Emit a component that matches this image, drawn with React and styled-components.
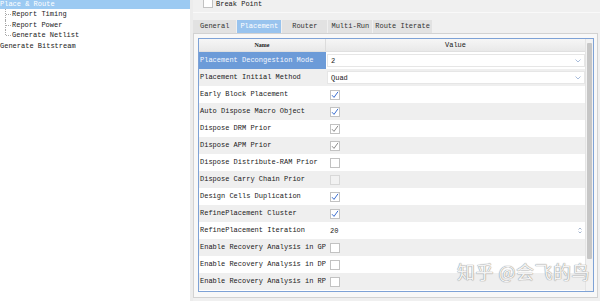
import React from 'react';
import styled, { createGlobalStyle } from 'styled-components';

const GlobalStyle = createGlobalStyle`
  html, body { margin: 0; padding: 0; }
  body { font-family: "Liberation Mono", "DejaVu Sans Mono", monospace; }
`;

const Page = styled.div`
  position: relative;
  display: flex;
  width: 600px;
  height: 301px;
  overflow: hidden;
  font-size: 7px;
  color: #1a1a1a;
`;

// 左側のツリー
const LeftPanel = styled.div`
  width: 190px;
  background: #fff;
  border-right: 3px solid #ececec;
`;

const Tree = styled.div`
  margin-top: -1.5px;
`;

const TreeRow = styled.div`
  position: relative;
  height: 10.5px;
  line-height: 10.5px;
  padding-left: ${p => (p.$child ? 12 : 0)}px;
  background: ${p => (p.$selected ? '#9ccaf2' : 'transparent')};
  color: ${p => (p.$selected ? '#fff' : '#1a1a1a')};
  white-space: nowrap;
  &::before {
    content: '';
    display: ${p => (p.$child ? 'block' : 'none')};
    position: absolute;
    left: 5px;
    top: 0;
    height: ${p => (p.$last ? '5px' : '10.5px')};
    border-left: 1px dotted #a8a8a8;
  }
  &::after {
    content: '';
    display: ${p => (p.$child ? 'block' : 'none')};
    position: absolute;
    left: 6px;
    top: 5px;
    width: 5px;
    border-top: 1px dotted #a8a8a8;
  }
`;

// 右側
const RightPanel = styled.div`
  flex: 1;
  display: flex;
  flex-direction: column;
  background: #f0f0f0;
`;

const TopBar = styled.div`
  height: 13px;
  display: flex;
  align-items: flex-start;
  gap: 3px;
  padding-left: 10px;
  border-bottom: 1px solid #f9f9f9;
  line-height: 8px;
`;

const Tabs = styled.div`
  display: flex;
  gap: 1px;
  margin-top: 7px;
  height: 13px;
`;

const Tab = styled.div`
  height: 13px;
  line-height: 13px;
  padding: 0 ${p => p.$pad}px;
  background: ${p => (p.$active ? '#98c3ee' : '#e2e2e2')};
  color: ${p => (p.$active ? '#fff' : '#333')};
  white-space: nowrap;
`;

const Pane = styled.div`
  flex: 1;
  margin: 0 2px 3px 0;
  border: 1px solid #d2d2d2;
  background: #f8f8f8;
  padding: 4px 3px 5px 4px;
  display: flex;
`;

const Table = styled.div`
  flex: 1;
  display: flex;
  border: 1px solid #7ea2d6;
  height: 252px;
  background: #fff;
`;

const Grid = styled.div`
  flex: 1;
  display: flex;
  flex-direction: column;
`;

const Header = styled.div`
  display: grid;
  grid-template-columns: 127px 1fr;
  height: 13px;
  background: linear-gradient(#f6f6f6, #e9e9e9);
  border-bottom: 1px solid #e0e0e0;
  box-sizing: border-box;
`;

const HeadCell = styled.div`
  text-align: center;
  line-height: 12px;
  font-weight: ${p => (p.$bold ? 'bold' : 'normal')};
  font-size: ${p => (p.$bold ? '6px' : '7px')};
  font-family: ${p => (p.$bold ? '"Liberation Serif", serif' : 'inherit')};
  border-right: ${p => (p.$bold ? '1px solid #dcdcdc' : 'none')};
`;

const Row = styled.div`
  display: grid;
  grid-template-columns: 127px 1fr;
  height: 17px;
  background: ${p => (p.$alt ? '#efefef' : '#fff')};
`;

const NameCell = styled.div`
  padding-left: 1px;
  line-height: 17px;
  white-space: nowrap;
  overflow: hidden;
  background: ${p => (p.$selected ? '#6c9bd8' : 'transparent')};
  color: ${p => (p.$selected ? '#f4f8ff' : '#1a1a1a')};
`;

const ValueCell = styled.div`
  display: flex;
  align-items: center;
  padding-left: 4px;
`;

const Combo = styled.div`
  flex: 1;
  height: 13px;
  margin-left: -3px;
  padding-left: 3px;
  box-sizing: border-box;
  display: flex;
  align-items: center;
  justify-content: space-between;
  background: #fff;
  border: 1px solid #e6e6e6;
  svg { margin-right: 3px; }
`;

const Spin = styled.div`
  flex: 1;
  display: flex;
  align-items: center;
  justify-content: space-between;
  padding-right: 3px;
`;

const Box = styled.span`
  display: inline-flex;
  align-items: center;
  justify-content: center;
  width: 8px;
  height: 8px;
  border: 1px solid ${p => (p.$disabled ? '#d8d8d8' : '#c2c2c2')};
  background: ${p => (p.$disabled ? '#f2f2f2' : '#fff')};
  margin-top: ${p => p.$top || 0}px;
`;

const ScrollBar = styled.div`
  width: 7px;
  background: #f2f2f2;
  border-left: 1px solid #e4e4e4;
  display: flex;
  flex-direction: column;
  align-items: center;
`;

const Thumb = styled.div`
  width: 5px;
  height: 216px;
  margin-top: 4px;
  background: #c6c6c6;
  border-radius: 1px;
`;

const Watermark = styled.div`
  position: absolute;
  right: 10px;
  bottom: 17px;
  font-family: "Noto Sans CJK SC", sans-serif;
  font-size: 18px;
  color: #f4f4f4;
  text-shadow: 0 0 1px #8a8a8a, 0 0 1px #9a9a9a;
  letter-spacing: 0.5px;
`;

function Check({ state, disabled, top }) {
  const color = disabled ? '#8c8c8c' : '#3c6fd0';
  return (
    <Box $disabled={disabled && !state} $top={top}>
      {state && (
        <svg width="8" height="8" viewBox="0 0 8 8">
          <path d="M1 4.2 L3 6.4 L7 0.8" fill="none" stroke={color} strokeWidth="1" />
        </svg>
      )}
    </Box>
  );
}

const Chevron = () => (
  <svg width="6" height="4" viewBox="0 0 6 4">
    <path d="M0.5 0.5 L3 3 L5.5 0.5" fill="none" stroke="#9fb6d8" strokeWidth="0.9" />
  </svg>
);

const Spinner = () => (
  <svg width="4" height="7" viewBox="0 0 4 7">
    <path d="M0.5 2.5 L2 1 L3.5 2.5 M0.5 4.5 L2 6 L3.5 4.5" fill="none" stroke="#8fa4c4" strokeWidth="0.8" />
  </svg>
);

const rows = [
  { name: 'Placement Decongestion Mode', combo: '2', selected: true },
  { name: 'Placement Initial Method', combo: 'Quad' },
  { name: 'Early Block Placement', check: true },
  { name: 'Auto Dispose Macro Object', check: true },
  { name: 'Dispose DRM Prior', check: true, disabled: true },
  { name: 'Dispose APM Prior', check: true, disabled: true },
  { name: 'Dispose Distribute-RAM Prior', check: false },
  { name: 'Dispose Carry Chain Prior', check: false, disabled: true },
  { name: 'Design Cells Duplication', check: true },
  { name: 'RefinePlacement Cluster', check: true },
  { name: 'RefinePlacement Iteration', spin: '20' },
  { name: 'Enable Recovery Analysis in GP', check: false },
  { name: 'Enable Recovery Analysis in DP', check: false },
  { name: 'Enable Recovery Analysis in RP', check: false },
];

const tabs = [
  { label: 'General', pad: 7 },
  { label: 'Placement', pad: 3, active: true },
  { label: 'Router', pad: 10 },
  { label: 'Multi-Run', pad: 3 },
  { label: 'Route Iterate', pad: 2 },
];

function Value({ row }) {
  if (row.combo) return <Combo>{row.combo}<Chevron /></Combo>;
  if (row.spin) return <Spin>{row.spin}<Spinner /></Spin>;
  return <Check state={row.check} disabled={row.disabled} />;
}

export default function App() {
  return (
    <Page>
      <GlobalStyle />
      <LeftPanel>
        <Tree>
          <TreeRow $selected>Place &amp; Route</TreeRow>
          <TreeRow $child>Report Timing</TreeRow>
          <TreeRow $child>Report Power</TreeRow>
          <TreeRow $child $last>Generate Netlist</TreeRow>
          <TreeRow>Generate Bitstream</TreeRow>
        </Tree>
      </LeftPanel>
      <RightPanel>
        <TopBar>
          <Check state={false} top={-2} />
          <span>Break Point</span>
        </TopBar>
        <Tabs>
          {tabs.map(t => (
            <Tab key={t.label} $pad={t.pad} $active={t.active}>{t.label}</Tab>
          ))}
        </Tabs>
        <Pane>
          <Table>
            <Grid>
              <Header>
                <HeadCell $bold>Name</HeadCell>
                <HeadCell>Value</HeadCell>
              </Header>
              {rows.map((r, i) => (
                <Row key={r.name} $alt={i % 2 === 1}>
                  <NameCell $selected={r.selected}>{r.name}</NameCell>
                  <ValueCell><Value row={r} /></ValueCell>
                </Row>
              ))}
            </Grid>
            <ScrollBar>
              <Thumb />
            </ScrollBar>
          </Table>
        </Pane>
      </RightPanel>
      <Watermark>知乎 @会飞的鸟</Watermark>
    </Page>
  );
}
